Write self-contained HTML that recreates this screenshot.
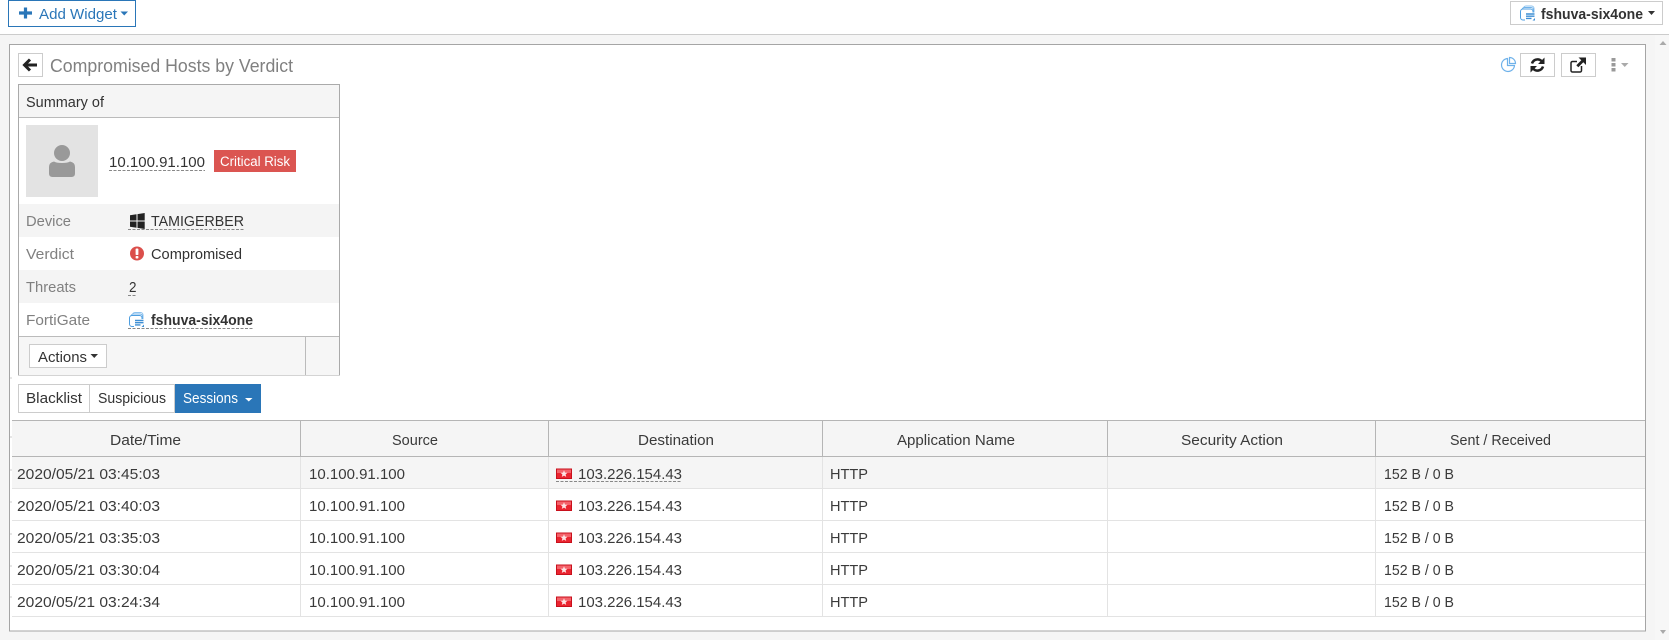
<!DOCTYPE html>
<html><head><meta charset="utf-8"><title>Compromised Hosts by Verdict</title>
<style>
html,body{margin:0;padding:0;width:1669px;height:640px;overflow:hidden;background:#f5f5f5}
svg{display:block}
text{font-family:"Liberation Sans",sans-serif;font-size:14.5px;fill:#333}
.l{fill:#808080}
.h{fill:#3a3a3a}
</style></head><body>
<svg width="1669" height="640" viewBox="0 0 1669 640" xmlns="http://www.w3.org/2000/svg">
<defs>
<g id="fg" fill="#fff"><rect x="3.5" y="0.5" width="10.500" height="9" rx="2.500" stroke="#8cc2ee"/><rect x="2" y="2" width="11.500" height="10" rx="2.500" stroke="#6fb2ea"/><rect x="0.5" y="3.500" width="12.500" height="11" rx="2.500" stroke="#4d9ee0"/><rect x="5" y="7" width="10" height="8" fill="#fff"/><path d="M6 8.500h8.500M6 10.700h8.500M6 12.900h5.500" stroke="#3f8fd4" stroke-width="1.400" fill="none"/><path d="M12.500 15l2.500-2.500v2.500z" fill="#3f8fd4"/></g>
<g id="hk"><rect x=".5" y=".5" width="15" height="9.500" fill="#ea2530" stroke="#c8101c"/><rect x="1" y="1" width="14" height="3.500" fill="#f4626a"/><path d="M8 1.800l1 2.300 2.500.2-1.900 1.600.6 2.500-2.200-1.300-2.200 1.300.6-2.500-1.900-1.600 2.500-.2z" fill="#fde4e4"/></g>
</defs>
<!-- top bar -->
<rect x="0" y="0" width="1669" height="34" fill="#fff"/>
<rect x="0" y="34" width="1669" height="1" fill="#ccc"/>
<rect x="8.500" y="0.500" width="127" height="26" fill="#fff" stroke="#2a76b8"/>
<path d="M25.500 7.500v11M19 13h13" stroke="#2a76b8" stroke-width="3.200" fill="none"/>
<text x="39" y="19" style="font-size:15px;fill:#2a76b8" textLength="78" lengthAdjust="spacingAndGlyphs">Add Widget</text>
<path d="M120.500 11.500h7.500l-3.750 4z" fill="#2a76b8"/>
<rect x="1510.500" y="1.500" width="152" height="23" fill="#fff" stroke="#ccc"/>
<use href="#fg" x="1520" y="5.500"/>
<text x="1541" y="19" style="font-weight:700;font-size:14.5px" textLength="102" lengthAdjust="spacingAndGlyphs">fshuva-six4one</text>
<path d="M1648 11h7l-3.500 4z" fill="#333"/>
<!-- scrollbar -->
<rect x="1655" y="35" width="14" height="605" fill="#f7f7f7"/>
<path d="M1659.500 45l3.500-4 3.500 4z" fill="#aaa"/><path d="M1660 630l3 4 3-4z" fill="#aaa"/>
<!-- panel -->
<rect x="9.500" y="44.500" width="1636" height="586.500" fill="#fff" stroke="#a5a5a5"/>
<path d="M10 378h2M10 437h2M10 470h2M10 502h2M10 534h2M10 566h2M10 597h2" stroke="#ccc"/>
<rect x="18.500" y="53.500" width="24" height="23" fill="#fff" stroke="#ccc"/>
<path d="M24.500 65h12.500M30 59.500l-5.500 5.500 5.500 5.500" fill="none" stroke="#222" stroke-width="3"/>
<text x="50" y="72" class="l" style="font-size:18.500px" textLength="243" lengthAdjust="spacingAndGlyphs">Compromised Hosts by Verdict</text>
<!-- toolbar -->
<path d="M1507.500 58.500a6.500 6.500 0 1 0 7 7h-7z" fill="none" stroke="#6fb2ea" stroke-width="1.200"/>
<path d="M1509.500 57.500v6h6a6 6 0 0 0-6-6z" fill="none" stroke="#6fb2ea" stroke-width="1.200"/>
<rect x="1520.500" y="53.500" width="34" height="23" fill="#fff" stroke="#ccc"/>
<path d="M1532 63.500a5.800 5.800 0 0 1 9.500-2.500M1543 66.500a5.800 5.800 0 0 1-9.500 2.500" fill="none" stroke="#222" stroke-width="2.500"/>
<path d="M1544.500 57.500v6.500h-6.500zM1530.500 72.500V66h6.500z" fill="#222"/>
<rect x="1561.500" y="53.500" width="34" height="23" fill="#fff" stroke="#ccc"/>
<path d="M1581.500 66v4.500a1.500 1.500 0 0 1-1.500 1.500h-7.500a1.500 1.500 0 0 1-1.500-1.500V63a1.500 1.500 0 0 1 1.500-1.500h4.500" fill="none" stroke="#222" stroke-width="1.500"/>
<path d="M1578.500 57.500h7.500v7.500l-2.700-2.700-5 5-2-2 5-5z" fill="#222"/>
<rect x="1611.500" y="58" width="4" height="3.500" fill="#999"/><rect x="1611.500" y="63" width="4" height="3.500" fill="#999"/><rect x="1611.500" y="68" width="4" height="3.500" fill="#999"/>
<path d="M1621 63h7.500l-3.750 4z" fill="#aaa"/>
<!-- summary card -->
<rect x="18.500" y="84.500" width="321" height="290.500" fill="#fff" stroke="#aaa"/>
<rect x="19" y="85" width="320" height="32" fill="#f5f5f5"/>
<rect x="19" y="117" width="320" height="1" fill="#bbb"/>
<text x="26" y="107" textLength="78" lengthAdjust="spacingAndGlyphs">Summary of</text>
<rect x="26" y="125" width="72" height="72" fill="#e3e3e3"/>
<circle cx="62" cy="153" r="8" fill="#999"/>
<path d="M54 161.500q2 1.500 8 1.500t8-1.500q5 1 5 5.500v6.500q0 3.500-3.500 3.500h-19q-3.500 0-3.500-3.500V167q0-4.500 5-5.500z" fill="#999"/>
<text x="109" y="167" textLength="96" lengthAdjust="spacingAndGlyphs">10.100.91.100</text>
<path d="M109 170.500h96" stroke="#888" stroke-dasharray="3 1.500"/>
<rect x="214" y="150" width="82" height="22" fill="#db5551"/>
<text x="220" y="166" style="fill:#fff;font-size:13.5px" textLength="70" lengthAdjust="spacingAndGlyphs">Critical Risk</text>
<rect x="19" y="204" width="320" height="33" fill="#f4f4f4"/>
<rect x="19" y="270" width="320" height="33" fill="#f4f4f4"/>
<text x="26" y="226" class="l" textLength="45" lengthAdjust="spacingAndGlyphs">Device</text>
<text x="26" y="259" class="l" textLength="48" lengthAdjust="spacingAndGlyphs">Verdict</text>
<text x="26" y="292" class="l" textLength="50" lengthAdjust="spacingAndGlyphs">Threats</text>
<text x="26" y="325" class="l" textLength="64" lengthAdjust="spacingAndGlyphs">FortiGate</text>
<path d="M130 215.300l6.500-1v6.200H130zM137.500 214.100l7.200-1.100v7.500h-7.200zM130 221.500h6.500v6.200l-6.500-1zM137.500 221.500h7.200v7.500l-7.200-1.100z" fill="#222"/>
<text x="151" y="226" textLength="93" lengthAdjust="spacingAndGlyphs">TAMIGERBER</text>
<path d="M128 229.500h116" stroke="#888" stroke-dasharray="3 1.500"/>
<circle cx="137" cy="253.500" r="7" fill="#db4f4b"/>
<rect x="135.600" y="248.500" width="2.800" height="6.500" rx=".8" fill="#fff"/><rect x="135.600" y="256" width="2.800" height="2.500" rx=".8" fill="#fff"/>
<text x="151" y="259" textLength="91" lengthAdjust="spacingAndGlyphs">Compromised</text>
<text x="129" y="292" textLength="7.500" lengthAdjust="spacingAndGlyphs">2</text>
<path d="M128 295.500h9" stroke="#888" stroke-dasharray="3 1.500"/>
<use href="#fg" x="129" y="312"/>
<text x="151" y="325" style="font-weight:700" textLength="102" lengthAdjust="spacingAndGlyphs">fshuva-six4one</text>
<path d="M128 328.500h125" stroke="#888" stroke-dasharray="3 1.500"/>
<rect x="19" y="336" width="320" height="39" fill="#f6f6f6"/>
<rect x="19" y="336" width="320" height="1" fill="#bbb"/>
<rect x="305" y="336" width="1" height="39" fill="#bbb"/>
<rect x="29.500" y="344.500" width="77" height="23" fill="#fff" stroke="#ccc"/>
<text x="38" y="362" textLength="49" lengthAdjust="spacingAndGlyphs">Actions</text>
<path d="M90.500 354h7.500l-3.750 4z" fill="#333"/>
<!-- tabs -->
<rect x="18.500" y="384.500" width="71" height="28" fill="#fff" stroke="#ccc"/>
<rect x="89.500" y="384.500" width="85" height="28" fill="#fff" stroke="#ccc"/>
<rect x="175" y="384" width="86" height="29" fill="#2a76b8"/>
<text x="26" y="403" textLength="56" lengthAdjust="spacingAndGlyphs">Blacklist</text>
<text x="98" y="403" textLength="68" lengthAdjust="spacingAndGlyphs">Suspicious</text>
<text x="183" y="403" style="fill:#fff" textLength="55" lengthAdjust="spacingAndGlyphs">Sessions</text>
<path d="M245 398h7.500l-3.750 3.500z" fill="#fff"/>
<!-- table -->
<rect x="12" y="420" width="1633" height="36" fill="#f5f5f5"/>
<rect x="12" y="420" width="1633" height="1" fill="#b5b5b5"/>
<rect x="12" y="456" width="1633" height="1" fill="#b5b5b5"/>
<rect x="12" y="457" width="1633" height="31" fill="#f5f5f5"/>
<g fill="#e3e3e3">
<rect x="12" y="488" width="1633" height="1"/><rect x="12" y="520" width="1633" height="1"/><rect x="12" y="552" width="1633" height="1"/><rect x="12" y="584" width="1633" height="1"/><rect x="12" y="616" width="1633" height="1"/>
<rect x="300" y="457" width="1" height="159"/><rect x="548" y="457" width="1" height="159"/><rect x="822" y="457" width="1" height="159"/><rect x="1107" y="457" width="1" height="159"/><rect x="1375" y="457" width="1" height="159"/>
</g>
<g fill="#b5b5b5">
<rect x="300" y="421" width="1" height="35"/><rect x="548" y="421" width="1" height="35"/><rect x="822" y="421" width="1" height="35"/><rect x="1107" y="421" width="1" height="35"/><rect x="1375" y="421" width="1" height="35"/>
</g>
<text class="h" x="110" y="445" textLength="71" lengthAdjust="spacingAndGlyphs">Date/Time</text>
<text class="h" x="392" y="445" textLength="46" lengthAdjust="spacingAndGlyphs">Source</text>
<text class="h" x="638" y="445" textLength="76" lengthAdjust="spacingAndGlyphs">Destination</text>
<text class="h" x="897" y="445" textLength="118" lengthAdjust="spacingAndGlyphs">Application Name</text>
<text class="h" x="1181" y="445" textLength="102" lengthAdjust="spacingAndGlyphs">Security Action</text>
<text class="h" x="1450" y="445" textLength="101" lengthAdjust="spacingAndGlyphs">Sent / Received</text>

<text class="h" x="17" y="479" textLength="143" lengthAdjust="spacingAndGlyphs">2020/05/21 03:45:03</text>
<text class="h" x="309" y="479" textLength="96" lengthAdjust="spacingAndGlyphs">10.100.91.100</text>
<use href="#hk" x="556" y="468.500"/>
<text class="h" x="578" y="479" textLength="104" lengthAdjust="spacingAndGlyphs">103.226.154.43</text>
<path d="M556 481.500h126" stroke="#888" stroke-dasharray="3 1.500"/>
<text class="h" x="830" y="479" textLength="38" lengthAdjust="spacingAndGlyphs">HTTP</text>
<text class="h" x="1384" y="479" textLength="70" lengthAdjust="spacingAndGlyphs">152 B / 0 B</text>

<text class="h" x="17" y="511" textLength="143" lengthAdjust="spacingAndGlyphs">2020/05/21 03:40:03</text>
<text class="h" x="309" y="511" textLength="96" lengthAdjust="spacingAndGlyphs">10.100.91.100</text>
<use href="#hk" x="556" y="500.500"/>
<text class="h" x="578" y="511" textLength="104" lengthAdjust="spacingAndGlyphs">103.226.154.43</text>
<text class="h" x="830" y="511" textLength="38" lengthAdjust="spacingAndGlyphs">HTTP</text>
<text class="h" x="1384" y="511" textLength="70" lengthAdjust="spacingAndGlyphs">152 B / 0 B</text>

<text class="h" x="17" y="543" textLength="143" lengthAdjust="spacingAndGlyphs">2020/05/21 03:35:03</text>
<text class="h" x="309" y="543" textLength="96" lengthAdjust="spacingAndGlyphs">10.100.91.100</text>
<use href="#hk" x="556" y="532.500"/>
<text class="h" x="578" y="543" textLength="104" lengthAdjust="spacingAndGlyphs">103.226.154.43</text>
<text class="h" x="830" y="543" textLength="38" lengthAdjust="spacingAndGlyphs">HTTP</text>
<text class="h" x="1384" y="543" textLength="70" lengthAdjust="spacingAndGlyphs">152 B / 0 B</text>

<text class="h" x="17" y="575" textLength="143" lengthAdjust="spacingAndGlyphs">2020/05/21 03:30:04</text>
<text class="h" x="309" y="575" textLength="96" lengthAdjust="spacingAndGlyphs">10.100.91.100</text>
<use href="#hk" x="556" y="564.500"/>
<text class="h" x="578" y="575" textLength="104" lengthAdjust="spacingAndGlyphs">103.226.154.43</text>
<text class="h" x="830" y="575" textLength="38" lengthAdjust="spacingAndGlyphs">HTTP</text>
<text class="h" x="1384" y="575" textLength="70" lengthAdjust="spacingAndGlyphs">152 B / 0 B</text>

<text class="h" x="17" y="607" textLength="143" lengthAdjust="spacingAndGlyphs">2020/05/21 03:24:34</text>
<text class="h" x="309" y="607" textLength="96" lengthAdjust="spacingAndGlyphs">10.100.91.100</text>
<use href="#hk" x="556" y="596.500"/>
<text class="h" x="578" y="607" textLength="104" lengthAdjust="spacingAndGlyphs">103.226.154.43</text>
<text class="h" x="830" y="607" textLength="38" lengthAdjust="spacingAndGlyphs">HTTP</text>
<text class="h" x="1384" y="607" textLength="70" lengthAdjust="spacingAndGlyphs">152 B / 0 B</text>
</svg>
</body></html>
